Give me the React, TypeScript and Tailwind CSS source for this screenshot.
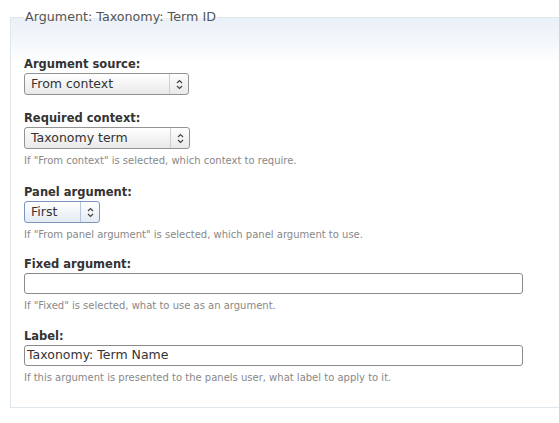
function Chevrons() {
  return (
    <svg width="7" height="11" viewBox="0 0 7 11" fill="none" stroke="#444" strokeWidth="1.2">
      <path d="M1 4 L3.5 1.5 L6 4" />
      <path d="M1 7 L3.5 9.5 L6 7" />
    </svg>
  )
}

function FakeSelect({ value, width, active }: { value: string; width: string; active?: boolean }) {
  return (
    <div
      className={`flex h-[22px] items-stretch rounded-[3px] border text-[12.5px] text-[#333] ${width} ${
        active
          ? 'border-[#7b96bd] bg-gradient-to-b from-[#ffffff] to-[#e4ebf4]'
          : 'border-[#939393] bg-gradient-to-b from-[#ffffff] to-[#e9e9e9]'
      }`}
    >
      <div className="flex flex-1 items-center pl-[6px]">{value}</div>
      <div className={`flex w-[19px] items-center justify-center border-l ${active ? 'border-[#b5c4d8]' : 'border-[#cfcfcf]'}`}>
        <Chevrons />
      </div>
    </div>
  )
}

function Field({ label, children, help, mt }: { label: string; children: React.ReactNode; help?: string; mt: string }) {
  return (
    <div className={mt}>
      <div className="text-[11.5px] font-bold leading-[16px] text-[#333]">{label}</div>
      <div className="mt-[1px]">{children}</div>
      {help && <div className="mt-[5px] text-[10px] leading-[13px] text-[#888]">{help}</div>}
    </div>
  )
}

export default function App() {
  return (
    <div className="h-[423px] w-[559px] overflow-hidden bg-white" style={{ fontFamily: '"DejaVu Sans", Verdana, sans-serif' }}>
      <fieldset className="ml-[10px] mt-[9px] w-[560px] border border-[#dfe6ec] bg-gradient-to-b from-[#e9f0f7] via-[#ffffff] via-[12%] to-[#ffffff] pb-[23px] pl-[13px] pt-[31px]">
        <legend className="px-[1px] text-[12.7px] leading-[16px] text-[#555]">Argument: Taxonomy: Term ID</legend>
        <Field label="Argument source:" mt="">
          <FakeSelect value="From context" width="w-[165px]" />
        </Field>
        <Field
          label="Required context:"
          mt="mt-[15px]"
          help={'If "From context" is selected, which context to require.'}
        >
          <FakeSelect value="Taxonomy term" width="w-[166px]" />
        </Field>
        <Field
          label="Panel argument:"
          mt="mt-[17px]"
          help={'If "From panel argument" is selected, which panel argument to use.'}
        >
          <FakeSelect value="First" width="w-[76px]" active />
        </Field>
        <Field label="Fixed argument:" mt="mt-[15px]" help={'If "Fixed" is selected, what to use as an argument.'}>
          <div className="h-[21px] w-[499px] rounded-[3px] border border-[#8a8a8a] bg-white" />
        </Field>
        <Field
          label="Label:"
          mt="mt-[16px]"
          help="If this argument is presented to the panels user, what label to apply to it."
        >
          <div className="flex h-[21px] w-[499px] items-center rounded-[3px] border border-[#8a8a8a] bg-white pl-[2px] text-[12.5px] text-[#333]">
            Taxonomy: Term Name
          </div>
        </Field>
      </fieldset>
    </div>
  )
}
